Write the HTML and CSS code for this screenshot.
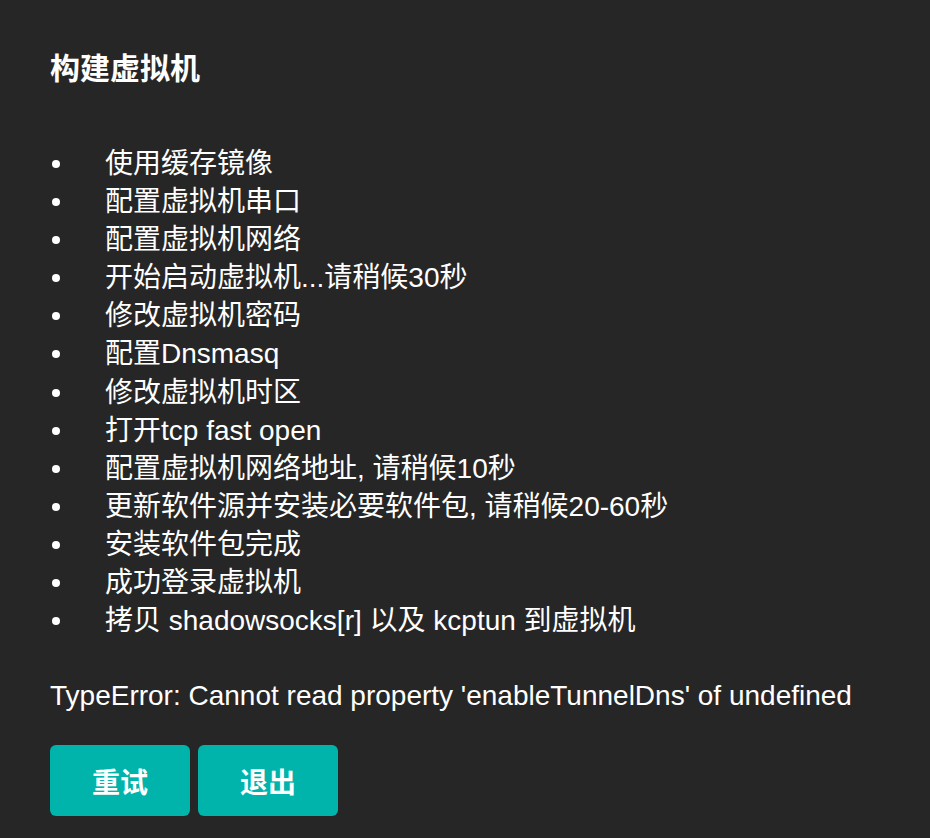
FILE: index.html
```html
<!DOCTYPE html>
<html lang="zh-CN">
<head>
<meta charset="utf-8">
<link rel="stylesheet" href="styles.css">
</head>
<body>
<div class="page">
  <h1 class="title">构建虚拟机</h1>
  <ul class="steps">
    <li>使用缓存镜像</li>
    <li>配置虚拟机串口</li>
    <li>配置虚拟机网络</li>
    <li>开始启动虚拟机...请稍候30秒</li>
    <li>修改虚拟机密码</li>
    <li>配置Dnsmasq</li>
    <li>修改虚拟机时区</li>
    <li>打开tcp fast open</li>
    <li>配置虚拟机网络地址, 请稍候10秒</li>
    <li>更新软件源并安装必要软件包, 请稍候20-60秒</li>
    <li>安装软件包完成</li>
    <li>成功登录虚拟机</li>
    <li>拷贝 shadowsocks[r] 以及 kcptun 到虚拟机</li>
  </ul>
  <p class="error">TypeError: Cannot read property 'enableTunnelDns' of undefined</p>
  <div class="actions">
    <button class="btn">重试</button>
    <button class="btn">退出</button>
  </div>
</div>
</body>
</html>
```
FILE: styles.css
```css
html, body {
  margin: 0;
  padding: 0;
  background: #262626;
}
body {
  color: #ffffff;
  font-family: "Liberation Sans", "Noto Sans CJK SC", sans-serif;
  width: 930px;
  height: 838px;
  overflow: hidden;
}
.page {
  padding: 51px 50px 0 50px;
}
.title {
  margin: 0;
  font-size: 30px;
  font-weight: bold;
  line-height: 36px;
}
.steps {
  list-style: none;
  margin: 58px 0 0 0;
  padding: 0;
}
.steps li {
  position: relative;
  padding-left: 55px;
  font-size: 28px;
  line-height: 38.1px;
}
.steps li::before {
  content: "";
  position: absolute;
  left: 2px;
  top: 15px;
  width: 8px;
  height: 8px;
  border-radius: 50%;
  background: #ffffff;
}
.error {
  margin: 37px 0 0 0;
  font-size: 28px;
  line-height: 38px;
}
.actions {
  display: flex;
  gap: 8px;
  margin-top: 30px;
}
.btn {
  width: 140px;
  height: 71px;
  border: none;
  border-radius: 6px;
  background: #00b4ab;
  color: #ffffff;
  font-family: "Liberation Sans", "Noto Sans CJK SC", sans-serif;
  font-size: 28px;
  font-weight: bold;
  padding: 0;
}
```
